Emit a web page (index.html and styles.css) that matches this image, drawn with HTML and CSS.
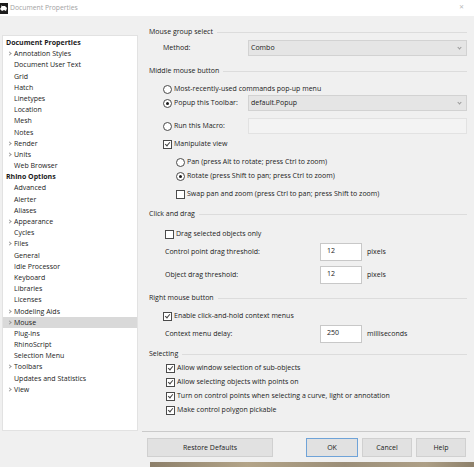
FILE: index.html
```html
<!DOCTYPE html>
<html>
<head>
<meta charset="UTF-8">
<title>Document Properties</title>
<link rel="stylesheet" href="styles.css">
</head>
<body>
<div class="window">
	<div class="titlebar">
		<svg class="app-icon" width="9" height="11" viewBox="0 0 9 11">
			<rect x="0" y="0" width="9" height="11" fill="#1c1c1c"/>
			<path d="M1 6 L3 3 L6 3 L8 5 L7 8 L5 7 L3 8 Z" fill="#fff"/>
			<path d="M2 2 L4 4 L3 5 Z" fill="#fff"/>
		</svg>
		<span class="title">Document Properties</span>
		<span class="close">&#x2715;</span>
	</div>

	<div class="content">
		<ul class="tree">
			<li class="head">Document Properties</li>
			<li class="more">Annotation Styles</li>
			<li>Document User Text</li>
			<li>Grid</li>
			<li>Hatch</li>
			<li>Linetypes</li>
			<li>Location</li>
			<li>Mesh</li>
			<li>Notes</li>
			<li class="more">Render</li>
			<li class="more">Units</li>
			<li>Web Browser</li>
			<li class="head">Rhino Options</li>
			<li>Advanced</li>
			<li>Alerter</li>
			<li>Aliases</li>
			<li class="more">Appearance</li>
			<li>Cycles</li>
			<li class="more">Files</li>
			<li>General</li>
			<li>Idle Processor</li>
			<li>Keyboard</li>
			<li>Libraries</li>
			<li>Licenses</li>
			<li class="more">Modeling Aids</li>
			<li class="more selected">Mouse</li>
			<li>Plug-ins</li>
			<li>RhinoScript</li>
			<li>Selection Menu</li>
			<li class="more">Toolbars</li>
			<li>Updates and Statistics</li>
			<li class="more">View</li>
		</ul>

		<div class="pane">
			<div class="group first">
				<div class="group-title"><span>Mouse group select</span></div>
				<div class="row near">
					<span class="label">Method:</span>
					<div class="combo">Combo<i class="arrow"></i></div>
				</div>
			</div>

			<div class="group">
				<div class="group-title"><span>Middle mouse button</span></div>
				<div class="row"><span class="radio"></span>Most-recently-used commands pop-up menu</div>
				<div class="row tight">
					<span class="label"><span class="radio on"></span>Popup this Toolbar:</span>
					<div class="combo">default.Popup<i class="arrow"></i></div>
				</div>
				<div class="row spaced">
					<span class="label"><span class="radio"></span>Run this Macro:</span>
					<div class="textbox disabled"></div>
				</div>
				<div class="row"><span class="check on"></span>Manipulate view</div>
				<div class="row sub"><span class="radio"></span>Pan (press Alt to rotate; press Ctrl to zoom)</div>
				<div class="row sub tight"><span class="radio on"></span>Rotate (press Shift to pan; press Ctrl to zoom)</div>
				<div class="row sub"><span class="check"></span>Swap pan and zoom (press Ctrl to pan; press Shift to zoom)</div>
			</div>

			<div class="group snug">
				<div class="group-title"><span>Click and drag</span></div>
				<div class="row wide"><span class="check"></span>Drag selected objects only</div>
				<div class="row field">
					<span class="label">Control point drag threshold:</span>
					<div class="textbox number">12</div>
					<span class="unit">pixels</span>
				</div>
				<div class="row field spaced">
					<span class="label">Object drag threshold:</span>
					<div class="textbox number">12</div>
					<span class="unit">pixels</span>
				</div>
			</div>

			<div class="group">
				<div class="group-title"><span>Right mouse button</span></div>
				<div class="row"><span class="check on"></span>Enable click-and-hold context menus</div>
				<div class="row field">
					<span class="label">Context menu delay:</span>
					<div class="textbox number">250</div>
					<span class="unit">milliseconds</span>
				</div>
			</div>

			<div class="group snug">
				<div class="group-title"><span>Selecting</span></div>
				<div class="row tight"><span class="check on"></span>Allow window selection of sub-objects</div>
				<div class="row tight"><span class="check on"></span>Allow selecting objects with points on</div>
				<div class="row tight"><span class="check on"></span>Turn on control points when selecting a curve, light or annotation</div>
				<div class="row tight"><span class="check on"></span>Make control polygon pickable</div>
			</div>

			<div class="footer">
				<button class="restore">Restore Defaults</button>
				<div class="actions">
					<button class="default">OK</button>
					<button>Cancel</button>
					<button>Help</button>
				</div>
			</div>
		</div>
	</div>
	<div class="desktop"></div>
</div>
</body>
</html>
```

FILE: styles.css
```css
body{
	margin: 0;
	width: 474px; height: 467px;
	overflow: hidden;
	background: #f0f0f0;
	font: 7px/1.3 "Open Sans", "Noto Sans", sans-serif;
	color: #1b1b1b;
}
.window{
	display: flex;
	flex-direction: column;
	height: 467px;
}

/* title bar */
.titlebar{
	height: 16px;
	background: #fff;
	display: flex;
	align-items: center;
	flex-shrink: 0;
}
.app-icon{
	margin-left: -1px;
	display: block;
}
.title{
	margin-left: 2px;
	color: #a3a3a3;
	font-size: 6.8px;
}
.close{
	margin-left: auto;
	margin-right: 10px;
	color: #b8b8b8;
	font-size: 6px;
}

.content{
	flex: 1;
	display: flex;
	min-height: 0;
}

/* left tree */
.tree{
	list-style: none;
	margin: 19px 0 0 2px;
	padding: 1px 0 0;
	width: 136px; height: 396px;
	box-sizing: border-box;
	background: #fff;
	border: 1px solid #e2e2e2;
	flex-shrink: 0;
}
.tree li{
	height: 11.2px;
	line-height: 11.2px;
	padding-left: 11px;
	position: relative;
	white-space: nowrap;
}
.tree li.head{
	padding-left: 3px;
	font-weight: bold;
}
.tree li.more:before{
	content: "";
	position: absolute;
	left: 5px; top: 4px;
	width: 2px; height: 2px;
	border: solid #999;
	border-width: 1px 1px 0 0;
	transform: rotate(45deg);
}
.tree li.selected{ background: #d9d9d9; }

/* settings pane */
.pane{
	flex: 1;
	display: flex;
	flex-direction: column;
	padding: 9px 7px 0 6px;
}
.group{ margin-top: 9px; }
.group.first{ margin-top: 0; }
.group.snug{ margin-top: 6px; }

.group-title{
	height: 14px;
	display: flex;
	align-items: center;
	padding-left: 5px;
}
.group-title:after{
	content: "";
	flex: 1;
	height: 1px;
	background: #dcdcdc;
	margin-left: 4px;
}

.row{
	height: 14px;
	display: flex;
	align-items: center;
	margin-top: 4px;
	padding-left: 19px;
	white-space: nowrap;
}
.row.near{ margin-top: 2px; }
.row.tight{ margin-top: 0; }
.row.wide{ margin-top: 6px; }
.row.spaced{ margin-top: 9px; }
.row.sub{ padding-left: 32px; }
.group.snug .row.tight{ padding-left: 22px; }
.group.snug .row.wide{ padding-left: 21px; }

.label{
	width: 85px;
	display: flex;
	align-items: center;
	flex-shrink: 0;
}
.row.field{ padding-left: 21px; }
.row.field .label{ width: 155px; }
.unit{ margin-left: 5px; }

.radio, .check{
	width: 7px; height: 7px;
	border: 1px solid #4a4a4a;
	background: #fff;
	margin-right: 2px;
	flex-shrink: 0;
	position: relative;
}
.radio{ border-radius: 50%; }
.radio.on:after{
	content: "";
	position: absolute;
	left: 2px; top: 2px;
	width: 3px; height: 3px;
	border-radius: 50%;
	background: #1b1b1b;
}
.check.on:after{
	content: "";
	position: absolute;
	left: 2px; top: 0;
	width: 2px; height: 4px;
	border: solid #444;
	border-width: 0 1px 1px 0;
	transform: rotate(40deg);
}

.combo{
	flex: 1;
	height: 16px;
	box-sizing: border-box;
	background: #e5e5e5;
	border: 1px solid #d2d2d2;
	display: flex;
	align-items: center;
	padding-left: 2px;
}
.arrow{
	margin-left: auto;
	margin-right: 5px;
	width: 2px; height: 2px;
	border: solid #9a9a9a;
	border-width: 0 1px 1px 0;
	transform: rotate(45deg);
	margin-top: -2px;
}
.textbox{
	height: 16px;
	box-sizing: border-box;
	border: 1px solid #d6d6d6;
	background: #fff;
}
.textbox.disabled{
	flex: 1;
	background: #f3f3f3;
	border-color: #e2e2e2;
}
.textbox.number{
	width: 42px;
	height: 18px;
	padding: 2px 0 0 6px;
	border-color: #c8c8c8;
}

/* buttons */
.footer{
	margin: auto -3px 0 -2px;
	border-top: 1px solid #cacaca;
	padding: 6px 4px 5px 5px;
	display: flex;
	justify-content: space-between;
}
.actions{
	display: flex;
	gap: 4px;
}
button{
	height: 19px;
	font: inherit;
	color: #1b1b1b;
	background: #e1e1e1;
	border: 1px solid #d0d0d0;
	padding: 0;
	width: 50px;
}
button.restore{ width: 126px; }
button.default{
	width: 52px;
	border-color: #6fa3d8;
}

.desktop{
	height: 5px;
	flex-shrink: 0;
	margin-left: 150px;
	background: linear-gradient(90deg, #8c7f6a, #b3a488 30%, #9b8e78 60%, #ad9f86 85%, #8d806a);
}
```
